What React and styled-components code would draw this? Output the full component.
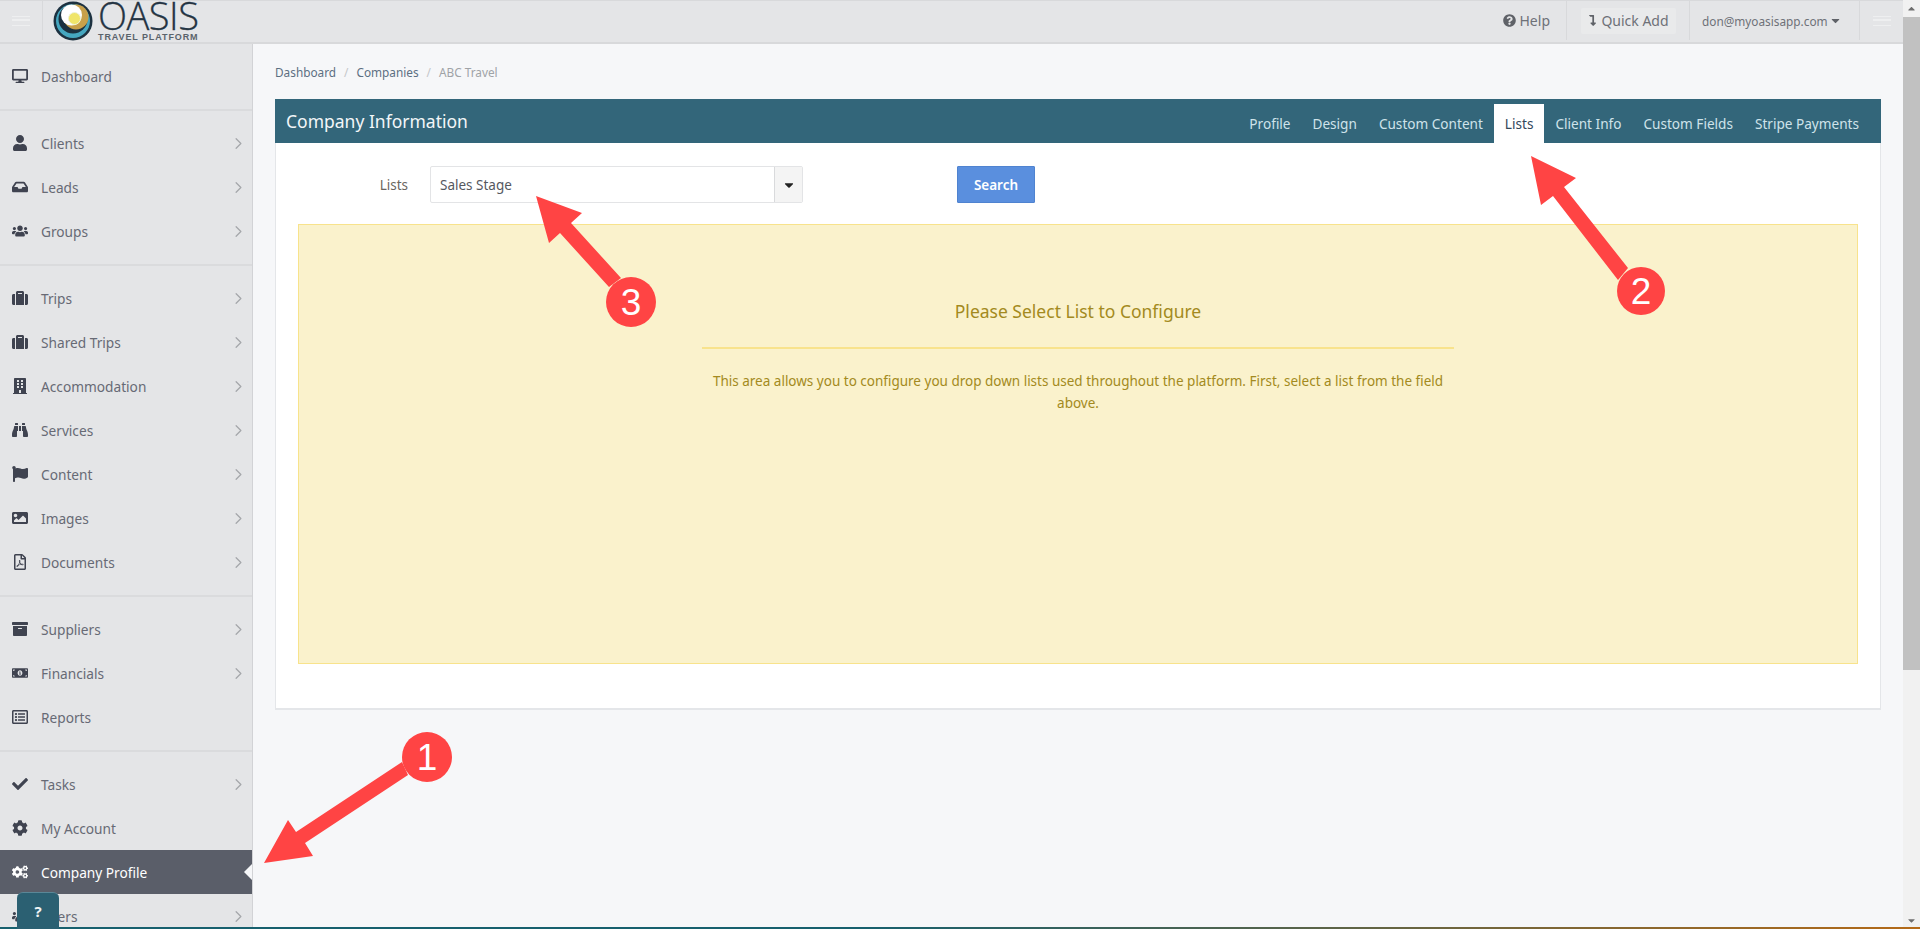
import React from 'react'
import styled, { createGlobalStyle } from 'styled-components'
import { ChevronRight } from 'lucide-react'
import {
  FaDesktop,
  FaUser,
  FaInbox,
  FaUsers,
  FaSuitcase,
  FaBuilding,
  FaBinoculars,
  FaFlag,
  FaImage,
  FaRegFilePdf,
  FaArchive,
  FaMoneyBillAlt,
  FaRegListAlt,
  FaCheck,
  FaCog,
  FaCogs,
  FaQuestionCircle,
  FaLevelDownAlt,
  FaCaretDown,
  FaCaretUp,
} from 'react-icons/fa'

const GlobalStyle = createGlobalStyle`
  html, body {
    margin: 0;
    height: 100%;
    overflow: hidden;
  }
  body {
    font-family: "Noto Sans", "Open Sans", sans-serif;
    font-size: 13.5px;
    color: #676a6c;
  }
  * {
    box-sizing: border-box;
  }
`

const Page = styled.div`
  position: relative;
  width: 1920px;
  height: 929px;
  display: grid;
  grid-template-columns: 1fr 17px;
  overflow: hidden;
  background: #f6f7f9;
`

const Main = styled.div`
  display: flex;
  flex-direction: column;
  min-width: 0;
  height: 929px;
`

const TopBar = styled.header`
  height: 44px;
  flex-shrink: 0;
  display: flex;
  align-items: stretch;
  background: #e4e5e7;
  border-top: 1px solid #d8d9db;
  border-bottom: 2px solid #d8d9db;
`

const BarCell = styled.div`
  display: flex;
  align-items: center;
  justify-content: ${({ $justify }) => $justify || 'center'};
  padding: ${({ $pad }) => $pad || '0'};
  border-left: ${({ $line }) => ($line ? '1px solid #d8d9db' : 'none')};
  border-right: ${({ $lineRight }) => ($lineRight ? '1px solid #d8d9db' : 'none')};
  width: ${({ $w }) => $w}px;
  flex-shrink: 0;
  margin-bottom: 2px;
`

const Burger = styled.div`
  width: 18px;
  height: 10px;
  border-top: 1.5px solid #eeeff0;
  border-bottom: 1.5px solid #eeeff0;
  position: relative;
  &::after {
    content: '';
    position: absolute;
    left: 0;
    right: 0;
    top: 2.5px;
    height: 1.5px;
    background: #eeeff0;
  }
`

const LogoWrap = styled.div`
  display: flex;
  align-items: flex-start;
  gap: 5px;
  padding: 0 0 0 10px;
  flex: 1;
`

const LogoWords = styled.div`
  display: flex;
  flex-direction: column;
  width: 100px;
  color: #243443;
`

const LogoName = styled.span`
  font-family: "Open Sans", sans-serif;
  font-weight: 300;
  font-size: 38px;
  line-height: 29px;
  letter-spacing: -0.5px;
  -webkit-text-stroke: 0.3px #243443;
`

const LogoSub = styled.span`
  margin-top: 3px;
  font-family: "Liberation Sans", sans-serif;
  font-weight: 700;
  font-size: 9px;
  line-height: 9px;
  letter-spacing: 0.9px;
  color: #5a636b;
  white-space: nowrap;
`

const BarText = styled.span`
  display: flex;
  align-items: center;
  gap: ${({ $gap }) => $gap || 4}px;
  font-size: ${({ $size }) => $size || 14}px;
  color: #6e7178;
  white-space: nowrap;
  svg {
    color: #5f6268;
  }
`

const QuickAdd = styled(BarText)`
  width: 95px;
  height: 26px;
  justify-content: center;
  background: #e9eaeb;
  border-radius: 2px;
  gap: 3px;
`

const Body = styled.div`
  flex: 1;
  display: flex;
  min-height: 0;
`

const Sidebar = styled.aside`
  width: 253px;
  flex-shrink: 0;
  background: #e4e5e7;
  border-right: 1px solid #d2d3d6;
  overflow: hidden;
`

const NavGroup = styled.div`
  padding: 10px 0 11px;
  border-bottom: 2px solid #dadbdd;
  &:last-child {
    border-bottom: none;
  }
`

const NavItem = styled.div`
  position: relative;
  height: 44px;
  display: flex;
  align-items: center;
  padding: 0 4px 0 12px;
  font-size: 13.7px;
  color: ${({ $active }) => ($active ? '#ffffff' : '#676a75')};
  background: ${({ $active }) => ($active ? '#5a5e69' : 'transparent')};
  ${({ $active }) =>
    $active &&
    `
    &::after {
      content: '';
      position: absolute;
      right: 0;
      top: 14px;
      border: 8px solid transparent;
      border-left: 0;
      border-right-color: #f6f7f9;
    }
  `}
`

const NavIcon = styled.span`
  width: 16px;
  display: flex;
  justify-content: center;
  margin-right: 13px;
  color: ${({ $active }) => ($active ? '#ffffff' : '#3f4350')};
  font-size: 16px;
`

const NavLabel = styled.span`
  flex: 1;
`

const NavArrow = styled.span`
  display: flex;
  color: #a5a7ab;
`

const Content = styled.main`
  flex: 1;
  min-width: 0;
  padding: 18px 22px 0 22px;
`

const Crumbs = styled.nav`
  display: flex;
  align-items: center;
  height: 20px;
  font-size: 11.8px;
  color: #5c6f82;
  margin-bottom: 17px;
`

const CrumbSep = styled.span`
  color: #c4c6c9;
  margin: 0 8px;
`

const CrumbNow = styled.span`
  color: #9fa3a7;
`

const Panel = styled.section`
  width: 1606px;
  background: #ffffff;
  border: 1px solid #e4e6e9;
  border-top: none;
  border-bottom-width: 2px;
`

const PanelHead = styled.div`
  height: 44px;
  margin: 0 -1px;
  display: flex;
  align-items: flex-end;
  justify-content: space-between;
  background: #33667a;
  padding: 0 11px;
`

const PanelTitle = styled.h2`
  margin: 0;
  align-self: center;
  font-size: 17.5px;
  font-weight: 400;
  color: #f2f6f8;
`

const Tabs = styled.div`
  display: flex;
  align-items: flex-end;
`

const Tab = styled.div`
  height: 39px;
  padding: 0 11px;
  display: flex;
  align-items: center;
  font-size: 13.6px;
  color: ${({ $active }) => ($active ? '#33475b' : '#cfe3ea')};
  background: ${({ $active }) => ($active ? '#ffffff' : 'transparent')};
`

const PanelBody = styled.div`
  padding: 23px 22px 44px 22px;
`

const FormRow = styled.div`
  display: flex;
  align-items: center;
  height: 37px;
  margin-bottom: 21px;
`

const FieldLabel = styled.label`
  width: 110px;
  text-align: right;
  margin-right: 22px;
  font-size: 13.5px;
  color: #6a6660;
`

const SelectBox = styled.div`
  width: 373px;
  height: 37px;
  display: flex;
  background: #ffffff;
  border: 1px solid #e3e4e6;
  border-radius: 2px;
`

const SelectValue = styled.span`
  flex: 1;
  display: flex;
  align-items: center;
  padding-left: 9px;
  font-size: 13.5px;
  color: #55585f;
`

const SelectCaret = styled.span`
  width: 28px;
  display: flex;
  align-items: center;
  justify-content: center;
  background: #f4f4f4;
  border-left: 1px solid #d9dadc;
  color: #222;
  font-size: 14px;
`

const SearchButton = styled.button`
  width: 78px;
  height: 37px;
  margin-left: 154px;
  font-family: inherit;
  font-size: 13.5px;
  font-weight: 600;
  color: #ffffff;
  background: #5a8fde;
  border: 1px solid #4f83d0;
  border-radius: 1px;
`

const Notice = styled.div`
  height: 440px;
  padding-top: 71px;
  display: flex;
  flex-direction: column;
  align-items: center;
  background: #faf2cc;
  border: 1px solid #f8e38c;
  color: #a38a20;
`

const NoticeTitle = styled.h3`
  margin: 0 0 21px;
  font-size: 17.5px;
  line-height: 30px;
  font-weight: 400;
`

const NoticeRule = styled.hr`
  width: 752px;
  margin: 0 0 21px;
  border: none;
  border-top: 2px solid #f8e38c;
`

const NoticeText = styled.p`
  width: 752px;
  margin: 0;
  font-size: 13.5px;
  line-height: 22px;
  text-align: center;
`

const Scrollbar = styled.div`
  height: 929px;
  display: flex;
  flex-direction: column;
  align-items: center;
  background: #f1f1f1;
`

const ScrollBtn = styled.div`
  height: 17px;
  width: 100%;
  display: flex;
  align-items: center;
  justify-content: center;
  flex-shrink: 0;
  color: #6d6d6d;
  font-size: 11px;
`

const ScrollTrack = styled.div`
  flex: 1;
  width: 100%;
`

const ScrollThumb = styled.div`
  height: 653px;
  width: 100%;
  background: #c1c1c1;
`

const HelpTab = styled.div`
  position: absolute;
  left: 17px;
  bottom: 0;
  width: 42px;
  height: 37px;
  padding-top: 8px;
  display: flex;
  justify-content: center;
  border-radius: 6px 6px 0 0;
  border-top: 1px solid #5a8797;
  background: #2b6072;
  color: #f0f4f6;
  font-size: 15px;
  font-weight: 700;
`

const BottomStrip = styled.div`
  position: absolute;
  left: 0;
  right: 0;
  bottom: 0;
  height: 2px;
  background: linear-gradient(to right, #17606e 0%, #17606e 45%, #b46a18 100%);
`

const Callout = styled.svg`
  position: absolute;
  left: 0;
  top: 0;
  width: 1920px;
  height: 929px;
  pointer-events: none;
`

const CalloutNumber = styled.text`
  font-family: "Liberation Sans", sans-serif;
  font-size: 37px;
  fill: #ffffff;
  text-anchor: middle;
`

const navGroups = [
  [{ icon: FaDesktop, label: 'Dashboard', plain: true }],
  [
    { icon: FaUser, label: 'Clients' },
    { icon: FaInbox, label: 'Leads' },
    { icon: FaUsers, label: 'Groups' },
  ],
  [
    { icon: FaSuitcase, label: 'Trips' },
    { icon: FaSuitcase, label: 'Shared Trips' },
    { icon: FaBuilding, label: 'Accommodation' },
    { icon: FaBinoculars, label: 'Services' },
    { icon: FaFlag, label: 'Content' },
    { icon: FaImage, label: 'Images' },
    { icon: FaRegFilePdf, label: 'Documents' },
  ],
  [
    { icon: FaArchive, label: 'Suppliers' },
    { icon: FaMoneyBillAlt, label: 'Financials' },
    { icon: FaRegListAlt, label: 'Reports', plain: true },
  ],
  [
    { icon: FaCheck, label: 'Tasks' },
    { icon: FaCog, label: 'My Account', plain: true },
    { icon: FaCogs, label: 'Company Profile', plain: true, active: true },
    { icon: FaUsers, label: 'Users' },
  ],
]

const tabs = ['Profile', 'Design', 'Custom Content', 'Lists', 'Client Info', 'Custom Fields', 'Stripe Payments']

const callouts = [
  {
    n: '1',
    cx: 427,
    cy: 757,
    r: 25,
    head: '264,863 288,820 296,832 402,762 408,775 305,843 313,856',
  },
  {
    n: '2',
    cx: 1641,
    cy: 291,
    r: 24,
    head: '1531,156 1576,178 1564,187 1628,268 1618,280 1553,196 1541,205',
  },
  {
    n: '3',
    cx: 631,
    cy: 302,
    r: 25,
    head: '536,196 582,213 571,223 621,278 609,287 560,233 549,243',
  },
]

function LogoMark() {
  return (
    <svg width="40" height="40" viewBox="0 0 40 40">
      <circle cx="20" cy="20" r="19.5" fill="#1c3140" />
      <circle cx="20" cy="20" r="17" fill="#45a7c0" />
      <circle cx="20" cy="18" r="14.5" fill="#1c3140" />
      <circle cx="23" cy="16" r="12.5" fill="#c8a04a" />
      <circle cx="18.5" cy="14" r="10.5" fill="#ffffff" />
      <circle cx="21.5" cy="17.5" r="6" fill="#f0e56a" stroke="#eef3d8" strokeWidth="1" />
    </svg>
  )
}

function NavRow({ item }) {
  const Icon = item.icon
  return (
    <NavItem $active={item.active}>
      <NavIcon $active={item.active}>
        <Icon />
      </NavIcon>
      <NavLabel>{item.label}</NavLabel>
      {!item.plain && (
        <NavArrow>
          <ChevronRight size={19} strokeWidth={1.6} />
        </NavArrow>
      )}
    </NavItem>
  )
}

export default function App() {
  return (
    <Page>
      <GlobalStyle />
      <Main>
        <TopBar>
          <BarCell $w={43} $lineRight>
            <Burger />
          </BarCell>
          <LogoWrap>
            <LogoMark />
            <LogoWords>
              <LogoName>OASIS</LogoName>
              <LogoSub>TRAVEL PLATFORM</LogoSub>
            </LogoWords>
          </LogoWrap>
          <BarCell $w={104} $lineRight $justify="flex-end" $pad="0 16px 0 0">
            <BarText $size={14}>
              <FaQuestionCircle size={13} />
              Help
            </BarText>
          </BarCell>
          <BarCell $w={122}>
            <QuickAdd $size={14}>
              <FaLevelDownAlt size={11} />
              Quick Add
            </QuickAdd>
          </BarCell>
          <BarCell $w={170} $line $justify="flex-start" $pad="0 0 0 12px">
            <BarText $size={11.8} $gap={1}>
              don@myoasisapp.com
              <FaCaretDown size={13} />
            </BarText>
          </BarCell>
          <BarCell $w={44} $line>
            <Burger />
          </BarCell>
        </TopBar>
        <Body>
          <Sidebar>
            {navGroups.map((group, i) => (
              <NavGroup key={i}>
                {group.map((item) => (
                  <NavRow key={item.label} item={item} />
                ))}
              </NavGroup>
            ))}
          </Sidebar>
          <Content>
            <Crumbs>
              <span>Dashboard</span>
              <CrumbSep>/</CrumbSep>
              <span>Companies</span>
              <CrumbSep>/</CrumbSep>
              <CrumbNow>ABC Travel</CrumbNow>
            </Crumbs>
            <Panel>
              <PanelHead>
                <PanelTitle>Company Information</PanelTitle>
                <Tabs>
                  {tabs.map((tab) => (
                    <Tab key={tab} $active={tab === 'Lists'}>
                      {tab}
                    </Tab>
                  ))}
                </Tabs>
              </PanelHead>
              <PanelBody>
                <FormRow>
                  <FieldLabel>Lists</FieldLabel>
                  <SelectBox>
                    <SelectValue>Sales Stage</SelectValue>
                    <SelectCaret>
                      <FaCaretDown />
                    </SelectCaret>
                  </SelectBox>
                  <SearchButton>Search</SearchButton>
                </FormRow>
                <Notice>
                  <NoticeTitle>Please Select List to Configure</NoticeTitle>
                  <NoticeRule />
                  <NoticeText>
                    This area allows you to configure you drop down lists used throughout the platform. First, select a
                    list from the field above.
                  </NoticeText>
                </Notice>
              </PanelBody>
            </Panel>
          </Content>
        </Body>
      </Main>
      <Scrollbar>
        <ScrollBtn>
          <FaCaretUp />
        </ScrollBtn>
        <ScrollThumb />
        <ScrollTrack />
        <ScrollBtn>
          <FaCaretDown />
        </ScrollBtn>
      </Scrollbar>
      <BottomStrip />
      <HelpTab>?</HelpTab>
      {callouts.map((c) => (
        <Callout key={c.n} viewBox="0 0 1920 929">
          <polygon points={c.head} fill="#ff4444" />
          <circle cx={c.cx} cy={c.cy} r={c.r} fill="#ff4444" />
          <CalloutNumber x={c.cx} y={c.cy + 13}>
            {c.n}
          </CalloutNumber>
        </Callout>
      ))}
    </Page>
  )
}
